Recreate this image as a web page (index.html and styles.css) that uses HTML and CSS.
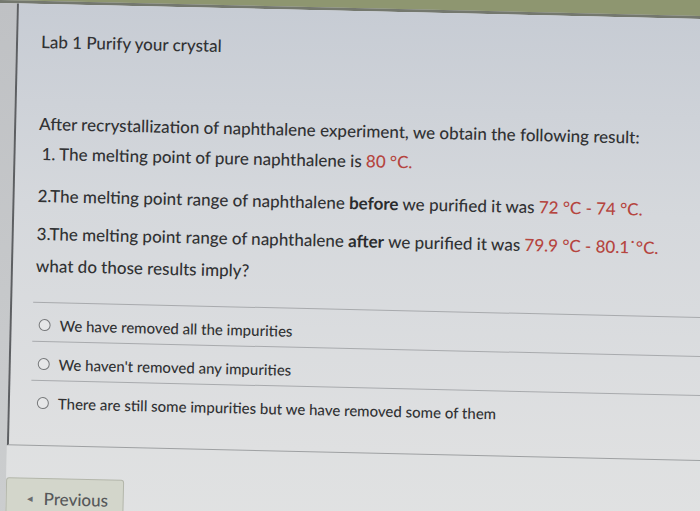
FILE: index.html
```html
<!DOCTYPE html>
<html lang="en">
<head>
<meta charset="utf-8">
<title>Lab 1 Purify your crystal</title>
<link rel="stylesheet" href="styles.css">
</head>
<body>
<div class="screen">
  <div class="side"></div>
  <div class="main">
    <section class="card">
      <div class="title">Lab 1 Purify your crystal</div>
      <div class="line intro">After recrystallization of naphthalene experiment, we obtain the following result:</div>
      <div class="line l1">1. The melting point of pure naphthalene is <span class="red">80 °C.</span></div>
      <div class="line l2">2.The melting point range of naphthalene <b>before</b> we purified it was <span class="red">72 °C - 74 °C.</span></div>
      <div class="line l3">3.The melting point range of naphthalene <b>after</b> we purified it was <span class="red">79.9 °C - 80.1˙°C.</span></div>
      <div class="line ask">what do those results imply?</div>
      <div class="options">
        <label class="opt"><span class="radio"></span><span>We have removed all the impurities</span></label>
        <label class="opt"><span class="radio"></span><span>We haven't removed any impurities</span></label>
        <label class="opt"><span class="radio"></span><span>There are still some impurities but we have removed some of them</span></label>
      </div>
    </section>
    <div class="nav">
      <button class="prev"><span class="arrow">◂</span>Previous</button>
    </div>
  </div>
</div>
</body>
</html>
```
FILE: styles.css
```css
html, body {
  margin: 0;
  padding: 0;
}
body {
  background: #8e9670;
  overflow: hidden;
  width: 700px;
  height: 511px;
  font-family: Lato, "Open Sans", sans-serif;
  font-weight: 500;
  color: #313234;
}
.screen {
  display: flex;
  width: 760px;
  height: 580px;
  transform: rotate(1.3deg);
  transform-origin: 0 0;
  background: #d6d8d8;
  border-top: 3px solid #74786e;
  box-sizing: border-box;
}
.side {
  width: 17px;
  flex: none;
  background: linear-gradient(#bfc1c4, #cdcfd0);
}
.main {
  flex: 1;
  display: flex;
  flex-direction: column;
  background: linear-gradient(#d3d6da, #e2e3e3);
}
.card {
  border-left: 2px solid #5d5f62;
  border-bottom: 1px solid #9ea0a2;
  background: linear-gradient(#c7ccd4 0%, #d5d8dc 45%, #dfe0e1 100%);
  padding: 28px 0 26px 23px;
  font-size: 17px;
}
.title {
  line-height: 20px;
  height: 20px;
  font-size: 17px;
}
.line {
  line-height: 20px;
  height: 20px;
  white-space: nowrap;
}
.intro { margin-top: 62px; }
.l1 { margin-top: 10px; padding-left: 3px; }
.l2 { margin-top: 22px; }
.l3 { margin-top: 18px; }
.ask { margin-top: 12px; }
.line b { font-weight: 700; color: #2b2c2e; }
.red { color: #b5453f; }
.options {
  margin-top: 26px;
  margin-left: -2px;
}
.opt {
  display: flex;
  align-items: center;
  gap: 9px;
  border-top: 1px solid #a8aaad;
  padding: 12px 0 6px 6px;
  line-height: 20px;
  font-size: 15px;
}
.radio {
  width: 10px;
  height: 10px;
  border: 1.5px solid #76787a;
  border-radius: 50%;
  background: #e6e7e8;
  flex: none;
}
.nav {
  padding-top: 32px;
}
.prev {
  display: flex;
  align-items: center;
  gap: 11px;
  width: 118px;
  height: 50px;
  padding: 0 0 10px 20px;
  box-sizing: border-box;
  border: 1px solid #b3b6aa;
  border-radius: 3px;
  background: #d3d6cb;
  font-family: Lato, "Open Sans", sans-serif;
  font-weight: 500;
  font-size: 17px;
  color: #56585a;
}
.arrow {
  font-size: 11px;
  color: #6a6c6e;
}
```
